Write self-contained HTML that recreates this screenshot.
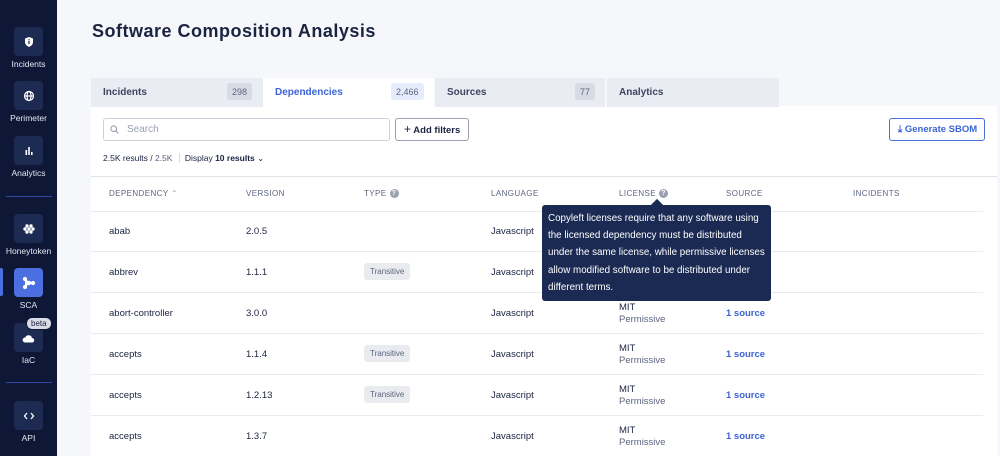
<!DOCTYPE html>
<html><head><meta charset="utf-8"><style>
*{box-sizing:border-box;margin:0;padding:0}
html,body{width:1000px;height:456px;overflow:hidden}
body{background:#f6f7fb;font-family:"Liberation Sans",sans-serif;color:#1b2340;position:relative}
.sb{position:absolute;left:0;top:0;width:57px;height:456px;background:#0e1836}
.it{position:absolute;left:14px;width:29px;height:29px;border-radius:4px;background:#1d2a52;display:flex;align-items:center;justify-content:center}
.lb{position:absolute;width:57px;text-align:center;font-size:8.5px;color:#e4e8f2}
.hr{position:absolute;left:6px;width:46px;height:1px;background:#2d4a9a}
h1{position:absolute;left:92px;top:21px;font-size:18px;font-weight:bold;color:#1b2340;letter-spacing:.5px}
.tab{position:absolute;top:78px;height:29px;background:#e9ecf2;font-size:10px;font-weight:bold;color:#3d4560;padding:9px 12px}
.cnt{position:absolute;top:5px;height:17px;border-radius:3px;background:#d8dbe3;font-size:9px;font-weight:normal;color:#5d6580;padding:4px 5px}
.panel{position:absolute;left:91px;top:106px;width:906px;height:350px;background:#fff}
.th{position:absolute;top:189px;font-size:8px;color:#5d6580;letter-spacing:.4px}
.row{position:absolute;left:91px;width:892px;height:1px;background:#e9ebf0}
.c{position:absolute;font-size:9.5px;color:#1b2340}
.tr{position:absolute;background:#e9ebef;border-radius:3px;font-size:8px;color:#5d6580;padding:4px 6px}
.q{display:inline-block;width:9px;height:9px;border-radius:50%;background:#9aa0b0;color:#fff;font-size:7px;text-align:center;line-height:9px;vertical-align:middle;margin-left:3px;font-weight:bold}
</style></head><body>
<div class="sb">
<div class="it" style="top:27px"><svg width="12" height="12" viewBox="0 0 12 12"><path d="M6 1L10 2.5V6C10 8.5 8 10 6 11 4 10 2 8.5 2 6V2.5Z" fill="#fff"/><rect x="5.4" y="5" width="1.2" height="3" fill="#1d2a52"/><circle cx="6" cy="3.8" r=".7" fill="#1d2a52"/></svg></div>
<div class="lb" style="top:59px">Incidents</div>
<div class="it" style="top:81px"><svg width="12" height="12" viewBox="0 0 12 12" fill="none" stroke="#fff" stroke-width="1.2"><circle cx="6" cy="6" r="4.5"/><ellipse cx="6" cy="6" rx="2" ry="4.5"/><path d="M1.5 6h9"/></svg></div>
<div class="lb" style="top:113px">Perimeter</div>
<div class="it" style="top:136px"><svg width="12" height="12" viewBox="0 0 12 12" fill="#fff"><rect x="2.5" y="5" width="1.6" height="5"/><rect x="5.2" y="2" width="1.6" height="8"/><rect x="8" y="7" width="1.6" height="3"/></svg></div>
<div class="lb" style="top:168px">Analytics</div>
<div class="hr" style="top:196px"></div>
<div class="it" style="top:214px"><svg width="12" height="12" viewBox="0 0 12 12" fill="#fff"><circle cx="4" cy="3" r="1.7"/><circle cx="8" cy="3" r="1.7"/><circle cx="2" cy="6" r="1.7"/><circle cx="6" cy="6" r="1.7"/><circle cx="10" cy="6" r="1.7"/><circle cx="4" cy="9" r="1.7"/><circle cx="8" cy="9" r="1.7"/></svg></div>
<div class="lb" style="top:246px">Honeytoken</div>
<div style="position:absolute;left:0;top:268px;width:3px;height:28px;background:#4b6fe0;border-radius:0 2px 2px 0"></div>
<div class="it" style="top:268px;background:#4b6fe0"><svg width="14" height="14" viewBox="0 0 14 14" fill="#fff" stroke="#fff" stroke-width="1.2"><path d="M3 3L7 7L3 11M7 7H11"/><circle cx="3" cy="3" r="1.5"/><circle cx="3" cy="11" r="1.5"/><circle cx="7" cy="7" r="1.6"/><circle cx="11" cy="7" r="1.5"/></svg></div>
<div class="lb" style="top:300px">SCA</div>
<div class="it" style="top:323px"><svg width="13" height="10" viewBox="0 0 13 10"><path d="M3 9.5H10.5A2.3 2.3 0 0 0 10 5 3.5 3.5 0 0 0 3.3 4.5 2.5 2.5 0 0 0 3 9.5Z" fill="#fff"/></svg></div>
<div style="position:absolute;left:26px;top:317px;background:#d8dce6;color:#1b2340;font-size:8px;border-radius:6px;padding:1px 4px;border:1px solid #0e1836">beta</div>
<div class="lb" style="top:355px">IaC</div>
<div class="hr" style="top:382px"></div>
<div class="it" style="top:401px"><svg width="12" height="10" viewBox="0 0 12 10" fill="none" stroke="#fff" stroke-width="1.3"><path d="M4 2L1.5 5 4 8M8 2L10.5 5 8 8"/></svg></div>
<div class="lb" style="top:433px">API</div>
</div>
<h1>Software Composition Analysis</h1>
<div class="panel"></div>
<div class="tab" style="left:91px;width:172px">Incidents<span class="cnt" style="left:136px">298</span></div>
<div class="tab" style="left:263px;width:171px;background:#fff;color:#3b63d6;height:29px">Dependencies<span class="cnt" style="left:128px;background:#e6ecfb;color:#5d6580">2,466</span></div>
<div class="tab" style="left:435px;width:170px">Sources<span class="cnt" style="left:140px">77</span></div>
<div class="tab" style="left:607px;width:172px">Analytics</div>
<div style="position:absolute;left:103px;top:118px;width:287px;height:23px;border:1px solid #cdd1db;border-radius:3px;font-size:10px;color:#9aa0b0;padding:5px 0 0 23px">Search</div>
<svg style="position:absolute;left:110px;top:125px" width="9" height="9" viewBox="0 0 9 9" fill="none" stroke="#9aa0b0" stroke-width="1.1"><circle cx="3.7" cy="3.7" r="2.8"/><path d="M5.8 5.8L8.3 8.3"/></svg>
<div style="position:absolute;left:395px;top:118px;width:74px;height:23px;border:1px solid #9aa0b0;border-radius:3px;font-size:9.5px;font-weight:bold;color:#1b2340;padding:5px 0 0 8px;white-space:nowrap"><span style="font-weight:normal;font-size:12px;line-height:10px">+</span> Add filters</div>
<div style="position:absolute;left:889px;top:118px;width:96px;height:23px;border:1px solid #4b6fe0;border-radius:3px;font-size:9.5px;font-weight:bold;color:#3b63d6;padding:5px 0 0 8px;white-space:nowrap">⤓ Generate SBOM</div>
<div style="position:absolute;left:103px;top:153px;font-size:8.5px;color:#1b2340">2.5K results / <span style="color:#5d6580">2.5K</span> <span style="border-left:1px solid #ddd;margin-left:4px;padding-left:5px">Display <b>10 results</b> ⌄</span></div>
<div class="row" style="top:176px;height:1px;left:91px;width:906px;background:#dfe2e8"></div>
<div class="th" style="left:109px">DEPENDENCY <span style="color:#aaa">⌃</span></div>
<div class="th" style="left:246px">VERSION</div>
<div class="th" style="left:364px">TYPE<span class="q">?</span></div>
<div class="th" style="left:491px">LANGUAGE</div>
<div class="th" style="left:619px">LICENSE<span class="q">?</span></div>
<div class="th" style="left:726px">SOURCE</div>
<div class="th" style="left:853px">INCIDENTS</div>
<div class="row" style="top:211px"></div><div class="row" style="top:251px"></div><div class="row" style="top:292px"></div><div class="row" style="top:333px"></div><div class="row" style="top:374px"></div><div class="row" style="top:415px"></div>
<div class="c" style="left:109px;top:226px">abab</div><div class="c" style="left:246px;top:226px">2.0.5</div><div class="c" style="left:491px;top:226px">Javascript</div>
<div class="c" style="left:109px;top:267px">abbrev</div><div class="c" style="left:246px;top:267px">1.1.1</div><div class="tr" style="left:364px;top:263px">Transitive</div><div class="c" style="left:491px;top:267px">Javascript</div>
<div class="c" style="left:109px;top:308px">abort-controller</div><div class="c" style="left:246px;top:308px">3.0.0</div><div class="c" style="left:491px;top:308px">Javascript</div>
<div class="c" style="left:109px;top:349px">accepts</div><div class="c" style="left:246px;top:349px">1.1.4</div><div class="tr" style="left:364px;top:345px">Transitive</div><div class="c" style="left:491px;top:349px">Javascript</div>
<div class="c" style="left:109px;top:390px">accepts</div><div class="c" style="left:246px;top:390px">1.2.13</div><div class="tr" style="left:364px;top:386px">Transitive</div><div class="c" style="left:491px;top:390px">Javascript</div>
<div class="c" style="left:109px;top:431px">accepts</div><div class="c" style="left:246px;top:431px">1.3.7</div><div class="c" style="left:491px;top:431px">Javascript</div>
<div class="c" style="left:619px;top:302px;line-height:12px">MIT<br><span style="color:#5d6580">Permissive</span></div><div class="c" style="left:726px;top:308px;color:#3b63d6;font-weight:bold">1 source</div>
<div class="c" style="left:619px;top:343px;line-height:12px">MIT<br><span style="color:#5d6580">Permissive</span></div><div class="c" style="left:726px;top:349px;color:#3b63d6;font-weight:bold">1 source</div>
<div class="c" style="left:619px;top:384px;line-height:12px">MIT<br><span style="color:#5d6580">Permissive</span></div><div class="c" style="left:726px;top:390px;color:#3b63d6;font-weight:bold">1 source</div>
<div class="c" style="left:619px;top:425px;line-height:12px">MIT<br><span style="color:#5d6580">Permissive</span></div><div class="c" style="left:726px;top:431px;color:#3b63d6;font-weight:bold">1 source</div>
<div style="position:absolute;left:652px;top:201px;width:10px;height:10px;background:#1b2a52;transform:rotate(45deg)"></div>
<div style="position:absolute;left:542px;top:205px;width:229px;height:96px;background:#1b2a52;border-radius:3px;color:#fff;font-size:9.8px;line-height:17.2px;padding:5px 6px;white-space:nowrap;overflow:hidden">Copyleft licenses require that any software using<br>the licensed dependency must be distributed<br>under the same license, while permissive licenses<br>allow modified software to be distributed under<br>different terms.</div>
</body></html>
